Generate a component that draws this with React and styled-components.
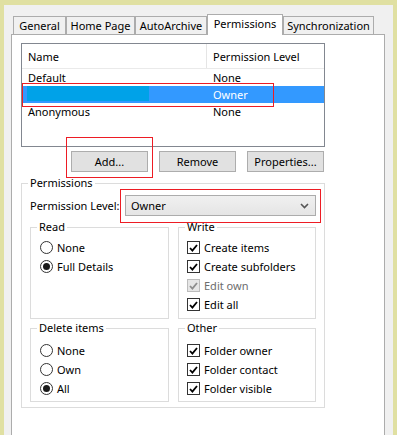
import React from 'react';
import styled, { createGlobalStyle } from 'styled-components';

const GlobalStyle = createGlobalStyle`
  html, body {
    margin: 0;
    padding: 0;
    background: #e0e0a2;
  }
  body {
    font-family: "Noto Sans", "Segoe UI", sans-serif;
    font-size: 11px;
    color: #000;
  }
  * { box-sizing: border-box; }
`;

const Window = styled.div`
  margin: 5px 4px 0 4px;
  height: 430px;
  background: #f0f0f0;
  padding: 8px 0 0 7px;
  overflow: hidden;
`;

const TabRow = styled.div`
  display: flex;
  align-items: flex-end;
  height: 21px;
  padding-left: 2px;
  position: relative;
  z-index: 1;
`;

const Tab = styled.div`
  width: ${p => p.$w}px;
  height: ${p => (p.$active ? 21 : 18)}px;
  margin-bottom: ${p => (p.$active ? -1 : 0)}px;
  display: flex;
  align-items: center;
  justify-content: center;
  background: ${p => (p.$active ? '#fff' : '#f0f0f0')};
  border: 1px solid #acacac;
  border-bottom: none;
  padding-bottom: ${p => (p.$active ? 3 : 0)}px;
  white-space: nowrap;
`;

const Panel = styled.div`
  width: 374px;
  height: 420px;
  background: #fff;
  border: 1px solid #acacac;
  padding: 8px 0 0 9px;
`;

const ListBox = styled.div`
  position: relative;
  width: 304px;
  height: 104px;
  border: 1px solid #828790;
  background: #fff;
`;

const ListRow = styled.div`
  display: grid;
  grid-template-columns: 185px 1fr;
  height: ${p => (p.$header ? 25 : 17)}px;
  align-items: center;
  background: ${p => (p.$selected ? '#3399ff' : 'transparent')};
  color: ${p => (p.$selected ? '#fff' : '#000')};
  border-bottom: ${p => (p.$header ? '1px solid #eaeaea' : 'none')};
`;

const Cell = styled.div`
  height: 100%;
  display: flex;
  align-items: center;
  padding-left: 6px;
  border-right: ${p => (p.$divider ? '1px solid #e5e5e5' : 'none')};
`;

const Redact = styled.div`
  width: 122px;
  height: 15px;
  background: #00a2e8;
  margin-left: -1px;
  align-self: flex-start;
`;

const Highlight = styled.div`
  position: absolute;
  left: ${p => p.$x}px;
  top: ${p => p.$y}px;
  width: ${p => p.$w}px;
  height: ${p => p.$h}px;
  border: 1px solid #ed1c24;
  pointer-events: none;
  z-index: 5;
`;

const ButtonRow = styled.div`
  position: relative;
  width: 304px;
  display: flex;
  justify-content: flex-end;
  gap: 11px;
  padding-right: 1px;
  margin-top: 4px;
`;

const Button = styled.div`
  width: 77px;
  height: 21px;
  display: flex;
  align-items: center;
  justify-content: center;
  background: #e1e1e1;
  border: 1px solid #adadad;
`;

const Group = styled.div`
  position: relative;
  border: 1px solid #dcdcdc;
  padding: ${p => p.$pad || '0'};
`;

const GroupTitle = styled.span`
  position: absolute;
  top: -9px;
  left: ${p => p.$left || 6}px;
  padding: 0 2px;
  line-height: 16px;
  background: #fff;
`;

const PermGroup = styled(Group)`
  width: 304px;
  margin-top: 11px;
  padding: 11px 8px 5px 8px;
`;

const LevelRow = styled.div`
  position: relative;
  display: flex;
  align-items: center;
  height: 21px;
`;

const Combo = styled.div`
  position: relative;
  margin-left: auto;
  width: 191px;
  height: 21px;
  display: flex;
  align-items: center;
  padding-left: 5px;
  background: linear-gradient(#f0f0f0, #e5e5e5);
  border: 1px solid #acacac;
`;

const Chevron = styled.svg`
  position: absolute;
  right: 6px;
  top: 7px;
`;

const GroupGrid = styled.div`
  display: grid;
  grid-template-columns: 139px 138px;
  column-gap: 9px;
  row-gap: 9px;
  margin-top: 11px;
`;

const Option = styled.div`
  display: flex;
  align-items: center;
  height: 19px;
  gap: 4px;
  color: ${p => (p.$disabled ? '#6d6d6d' : '#000')};
  white-space: nowrap;
`;

const RadioCircle = styled.span`
  width: 13px;
  height: 13px;
  border-radius: 50%;
  border: 1px solid #333;
  background: #fff;
  display: flex;
  align-items: center;
  justify-content: center;
  flex: none;
  &::after {
    content: '';
    width: 7px;
    height: 7px;
    border-radius: 50%;
    background: ${p => (p.$on ? '#1a1a1a' : 'transparent')};
  }
`;

const CheckBox = styled.span`
  width: 13px;
  height: 13px;
  border: 1px solid ${p => (p.$disabled ? '#bcbcbc' : '#333')};
  background: ${p => (p.$disabled ? '#e6e6e6' : '#fff')};
  display: flex;
  align-items: center;
  justify-content: center;
  flex: none;
`;

const Radio = ({ on, children }) => (
  <Option>
    <RadioCircle $on={on} />
    {children}
  </Option>
);

const Check = ({ disabled, children }) => (
  <Option $disabled={disabled}>
    <CheckBox $disabled={disabled}>
      <svg width="9" height="8" viewBox="0 0 9 8">
        <path d="M1 4 L3.4 6.6 L8 1" fill="none" stroke={disabled ? '#8d8d8d' : '#000'} strokeWidth="1.8" />
      </svg>
    </CheckBox>
    {children}
  </Option>
);

const rows = [
  { name: 'Default', level: 'None' },
  { name: null, level: 'Owner', selected: true },
  { name: 'Anonymous', level: 'None' },
];

const App = () => (
  <>
    <GlobalStyle />
    <Window>
      <TabRow>
        <Tab $w={53}>General</Tab>
        <Tab $w={69}>Home Page</Tab>
        <Tab $w={72}>AutoArchive</Tab>
        <Tab $w={76} $active>Permissions</Tab>
        <Tab $w={91}>Synchronization</Tab>
      </TabRow>
      <Panel>
        <ListBox>
          <ListRow $header>
            <Cell $divider>Name</Cell>
            <Cell>Permission Level</Cell>
          </ListRow>
          {rows.map((r, i) => (
            <ListRow key={i} $selected={r.selected}>
              <Cell>{r.name || <Redact />}</Cell>
              <Cell>{r.level}</Cell>
            </ListRow>
          ))}
          <Highlight $x={0} $y={39} $w={252} $h={24} />
        </ListBox>
        <ButtonRow>
          <Button>Add...</Button>
          <Button>Remove</Button>
          <Button>Properties...</Button>
          <Highlight $x={45} $y={-14} $w={87} $h={41} />
        </ButtonRow>
        <PermGroup>
          <GroupTitle $left={6}>Permissions</GroupTitle>
          <LevelRow>
            Permission Level:
            <Combo>
              Owner
              <Chevron width="9" height="6" viewBox="0 0 9 6">
                <path d="M1 1 L4.5 4.5 L8 1" fill="none" stroke="#555" strokeWidth="1.6" />
              </Chevron>
            </Combo>
            <Highlight $x={90} $y={-6} $w={201} $h={34} />
          </LevelRow>
          <GroupGrid>
            <Group $pad="10px 8px 4px 9px">
              <GroupTitle>Read</GroupTitle>
              <Radio>None</Radio>
              <Radio on>Full Details</Radio>
            </Group>
            <Group $pad="10px 8px 4px 8px">
              <GroupTitle>Write</GroupTitle>
              <Check>Create items</Check>
              <Check>Create subfolders</Check>
              <Check disabled>Edit own</Check>
              <Check>Edit all</Check>
            </Group>
            <Group $pad="12px 8px 3px 9px">
              <GroupTitle>Delete items</GroupTitle>
              <Radio>None</Radio>
              <Radio>Own</Radio>
              <Radio on>All</Radio>
            </Group>
            <Group $pad="12px 8px 3px 8px">
              <GroupTitle>Other</GroupTitle>
              <Check>Folder owner</Check>
              <Check>Folder contact</Check>
              <Check>Folder visible</Check>
            </Group>
          </GroupGrid>
        </PermGroup>
      </Panel>
    </Window>
  </>
);

export default App;
